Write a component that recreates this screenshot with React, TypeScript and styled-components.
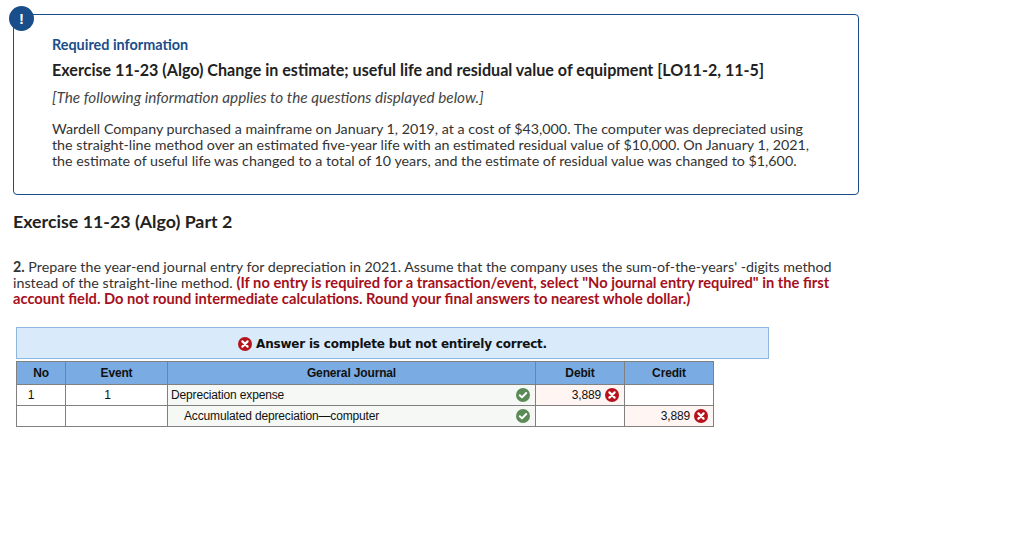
import React from "react";
import styled, { createGlobalStyle } from "styled-components";

const GlobalStyle = createGlobalStyle`
    html, body {
        margin: 0;
        padding: 0;
        background: #fff;
    }
    body {
        font-family: "Lato", "Open Sans", sans-serif;
        color: #2d2d2d;
    }
`;

const ErrorIcon = ({ size = 14 }: { size?: number }) => (
    <StatusSvg width={size} height={size} viewBox="0 0 14 14">
        <circle cx="7" cy="7" r="7" fill="#b5121b" />
        <path d="M4.4 4.4l5.2 5.2M9.6 4.4l-5.2 5.2" stroke="#fff" strokeWidth="2.2" strokeLinecap="round" />
    </StatusSvg>
);

const CheckIcon = () => (
    <StatusSvg width={14} height={14} viewBox="0 0 14 14">
        <circle cx="7" cy="7" r="7" fill="#5a8a55" />
        <path d="M3.8 7.3l2.2 2.1 4.2-4.4" fill="none" stroke="#fff" strokeWidth="2" strokeLinecap="round" strokeLinejoin="round" />
    </StatusSvg>
);

export default function App() {
    return (
        <Page>
            <GlobalStyle />
            <InfoBox>
                <AlertBadge>!</AlertBadge>
                <RequiredLabel>Required information</RequiredLabel>
                <BoxTitle>Exercise 11-23 (Algo) Change in estimate; useful life and residual value of equipment [LO11-2, 11-5]</BoxTitle>
                <Note>[The following information applies to the questions displayed below.]</Note>
                <BodyText>
                    Wardell Company purchased a mainframe on January 1, 2019, at a cost of $43,000. The computer was depreciated using
                    <br />
                    the straight-line method over an estimated five-year life with an estimated residual value of $10,000. On January 1, 2021,
                    <br />
                    the estimate of useful life was changed to a total of 10 years, and the estimate of residual value was changed to $1,600.
                </BodyText>
            </InfoBox>

            <PartTitle>Exercise 11-23 (Algo) Part 2</PartTitle>

            <Question>
                <b>2.</b> Prepare the year-end journal entry for depreciation in 2021. Assume that the company uses the sum-of-the-years' -digits method
                <br />
                instead of the straight-line method.{" "}
                <Emphasis>
                    (If no entry is required for a transaction/event, select "No journal entry required" in the first
                    <br />
                    account field. Do not round intermediate calculations. Round your final answers to nearest whole dollar.)
                </Emphasis>
            </Question>

            <Banner>
                <ErrorIcon />
                <BannerText>Answer is complete but not entirely correct.</BannerText>
            </Banner>

            <Journal>
                <colgroup>
                    <col width={49} />
                    <col width={102} />
                    <col width={368} />
                    <col width={89} />
                    <col width={89} />
                </colgroup>
                <thead>
                    <tr>
                        <HeadCell>No</HeadCell>
                        <HeadCell>Event</HeadCell>
                        <HeadCell>General Journal</HeadCell>
                        <HeadCell>Debit</HeadCell>
                        <HeadCell>Credit</HeadCell>
                    </tr>
                </thead>
                <tbody>
                    <tr>
                        <CenterCell $shift={20}>1</CenterCell>
                        <CenterCell $shift={18}>1</CenterCell>
                        <AccountCell>
                            <AccountRow>
                                Depreciation expense
                                <CheckIcon />
                            </AccountRow>
                        </AccountCell>
                        <AmountCell $wrong>
                            <AmountRow>
                                3,889 <ErrorIcon />
                            </AmountRow>
                        </AmountCell>
                        <AmountCell />
                    </tr>
                    <tr>
                        <CenterCell />
                        <CenterCell />
                        <AccountCell>
                            <AccountRow $indent>
                                Accumulated depreciation—computer
                                <CheckIcon />
                            </AccountRow>
                        </AccountCell>
                        <AmountCell />
                        <AmountCell $wrong>
                            <AmountRow>
                                3,889 <ErrorIcon />
                            </AmountRow>
                        </AmountCell>
                    </tr>
                </tbody>
            </Journal>
        </Page>
    );
}

const Page = styled.div`
    width: 1022px;
    height: 537px;
    box-sizing: border-box;
    padding: 14px 0 0 13px;
    overflow: hidden;
`;

const InfoBox = styled.section`
    position: relative;
    box-sizing: border-box;
    width: 846px;
    height: 181px;
    padding: 21px 38px 0;
    border: 1px solid #1a4e8a;
    border-radius: 4px;
`;

const AlertBadge = styled.div`
    position: absolute;
    left: -5px;
    top: -9px;
    width: 25px;
    height: 25px;
    border-radius: 50%;
    background: #1a4e8a;
    color: #fff;
    font: bold 15px/25px "Liberation Sans", sans-serif;
    text-align: center;
`;

const RequiredLabel = styled.div`
    font-size: 14.4px;
    line-height: 18px;
    font-weight: 700;
    color: #1a4e8a;
`;

const BoxTitle = styled.h2`
    margin: 7px 0 0;
    font-size: 16.1px;
    line-height: 18px;
    font-weight: 700;
    color: #222;
`;

const Note = styled.p`
    margin: 9px 0 0;
    font-size: 15.3px;
    line-height: 18px;
    font-style: italic;
    color: #444;
`;

const BodyText = styled.p`
    margin: 15px 0 0;
    font-size: 14.28px;
    line-height: 16px;
    color: #333;
    white-space: nowrap;
`;

const PartTitle = styled.h3`
    margin: 15px 0 0;
    font-size: 17.8px;
    line-height: 22px;
    font-weight: 700;
    color: #222;
`;

const Question = styled.p`
    margin: 27px 0 0;
    height: 48px;
    font-size: 14.28px;
    line-height: 16px;
    color: #333;
    white-space: nowrap;
`;

const Emphasis = styled.strong`
    color: #a6101c;
    font-size: 14.7px;
    line-height: 15px;
    font-weight: 700;
`;

const Banner = styled.div`
    box-sizing: border-box;
    display: flex;
    align-items: center;
    justify-content: center;
    gap: 4px;
    width: 753px;
    height: 32px;
    padding-top: 2px;
    margin: 20px 0 0 3px;
    background: #d9ebfa;
    border: 1px solid #8fb6de;
`;

const BannerText = styled.span`
    font: bold 12px/16px "DejaVu Sans", sans-serif;
    letter-spacing: -0.2px;
    color: #111;
`;

const Journal = styled.table`
    width: 698px;
    margin: 2px 0 0 3px;
    border-collapse: collapse;
    table-layout: fixed;
    font: 12px/14px "Liberation Sans", sans-serif;
    letter-spacing: -0.15px;
    color: #111;
`;

const HeadCell = styled.th`
    height: 22px;
    padding: 0;
    border: 1px solid #808080;
    background: #7aabe3;
    font-weight: 700;
    text-align: center;
`;

const BodyCell = styled.td`
    height: 20px;
    padding: 0;
    border: 1px solid #808080;
`;

const CenterCell = styled(BodyCell)<{ $shift?: number }>`
    text-align: center;
    padding-right: ${(p) => p.$shift ?? 0}px;
`;

const AccountCell = styled(BodyCell)`
    background: #f6f8f5;
`;

const AccountRow = styled.div<{ $indent?: boolean }>`
    display: flex;
    align-items: center;
    justify-content: space-between;
    padding: 0 5px 0 ${(p) => (p.$indent ? "16px" : "3px")};
`;

const AmountCell = styled(BodyCell)<{ $wrong?: boolean }>`
    background: ${(p) => (p.$wrong ? "#fff5f3" : "#fff")};
`;

const AmountRow = styled.div`
    display: flex;
    align-items: center;
    justify-content: flex-end;
    gap: 4px;
    padding-right: 5px;
`;

const StatusSvg = styled.svg`
    display: block;
    flex: none;
`;
